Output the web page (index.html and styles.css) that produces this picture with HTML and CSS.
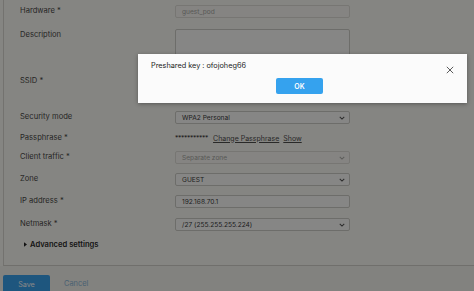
FILE: index.html
```html
<!DOCTYPE html>
<html>
<head>
<meta charset="utf-8">
<link rel="stylesheet" href="styles.css">
</head>
<body>
<div class="page">
  <div class="panel">
    <div class="row"><span class="lbl">Hardware *</span><div class="box input disabled">guest_pod</div></div>
    <div class="row gap-11"><span class="lbl">Description</span><div class="box textarea"></div></div>
    <div class="row gap-9"><span class="lbl lbl-mid">SSID *</span><div class="box input">Guest</div></div>
    <div class="row gap-24"><span class="lbl">Security mode</span><div class="box select">WPA2 Personal<svg class="chev" viewBox="0 0 8 5"><path d="M1 1l3 3 3-3"/></svg></div></div>
    <div class="row gap-8 pass-row"><span class="lbl">Passphrase *</span><div class="pass"><span class="stars">***********</span><a class="link">Change Passphrase</a><a class="link">Show</a></div></div>
    <div class="row gap-7"><span class="lbl">Client traffic *</span><div class="box select disabled">Separate zone<svg class="chev" viewBox="0 0 8 5"><path d="M1 1l3 3 3-3"/></svg></div></div>
    <div class="row gap-9"><span class="lbl">Zone</span><div class="box select">GUEST<svg class="chev" viewBox="0 0 8 5"><path d="M1 1l3 3 3-3"/></svg></div></div>
    <div class="row gap-9"><span class="lbl">IP address *</span><div class="box input">192.168.70.1</div></div>
    <div class="row gap-10"><span class="lbl">Netmask *</span><div class="box select">/27 (255.255.255.224)<svg class="chev" viewBox="0 0 8 5"><path d="M1 1l3 3 3-3"/></svg></div></div>
    <div class="advanced"><svg class="tri" viewBox="0 0 4 6"><path d="M0 0l4 3-4 3z"/></svg>Advanced settings</div>
  </div>
  <div class="footer">
    <button class="btn-save">Save</button>
    <a class="cancel">Cancel</a>
  </div>
</div>
<div class="overlay"></div>
<div class="modal">
  <div class="modal-head">
    <span class="modal-text">Preshared key : ofojoheg66</span>
    <svg class="close" viewBox="0 0 10 10"><path d="M1 1l8 8M9 1l-8 8"/></svg>
  </div>
  <div class="modal-actions"><button class="btn-ok">OK</button></div>
</div>
</body>
</html>
```
FILE: styles.css
```css
html, body {
  margin: 0;
  padding: 0;
  width: 474px;
  height: 291px;
  overflow: hidden;
  background: #fcfbf6;
  font-family: "Inter", "Liberation Sans", sans-serif;
}
.page {
  display: flex;
  flex-direction: column;
}
.panel {
  margin-left: 3px;
  border-left: 1px solid #d9d8d2;
  border-bottom: 1px solid #d3d2cc;
  padding: 5px 0 0 16px;
  height: 266px;
  box-sizing: border-box;
  display: flex;
  flex-direction: column;
}
.row {
  display: grid;
  grid-template-columns: 155px 175px;
  align-items: start;
}
.gap-7 { margin-top: 7px; }
.gap-8 { margin-top: 8px; }
.gap-9 { margin-top: 9px; }
.gap-10 { margin-top: 10px; }
.gap-11 { margin-top: 11px; }
.gap-24 { margin-top: 24px; }
.lbl {
  font-size: 7.6px;
  color: #4a4a48;
  line-height: 11px;
}
.lbl-mid { line-height: 13px; }
.box {
  height: 13px;
  box-sizing: border-box;
  border: 1px solid #cfcec8;
  border-radius: 2px;
  background: #fefefc;
  font-size: 6.6px;
  color: #3a3a3a;
  padding: 0 6px;
  display: flex;
  align-items: center;
  position: relative;
}
.box.disabled {
  color: #a8a8a4;
  background: #fbfaf6;
  border-color: #e0dfd9;
}
.textarea {
  height: 36px;
}
.chev {
  position: absolute;
  right: 4px;
  top: 4px;
  width: 6px;
  height: 4px;
  fill: none;
  stroke: #555;
  stroke-width: 1.4;
}
.disabled .chev { stroke: #b0b0ac; }
.pass-row .lbl { line-height: 12px; }
.pass {
  height: 12px;
  display: flex;
  align-items: center;
  font-size: 6.6px;
  color: #3a3a3a;
}
.stars { letter-spacing: -0.3px; margin-right: 5px; }
.link {
  text-decoration: underline;
  color: #4e4e4c;
  margin-right: 4px;
  font-size: 7px;
}
.advanced {
  margin-top: 9px;
  margin-left: 4px;
  display: flex;
  align-items: center;
  font-size: 7.6px;
  font-weight: 600;
  color: #2a2a2a;
}
.tri {
  width: 3px;
  height: 5px;
  margin-right: 3px;
  fill: #222;
}
.footer {
  height: 25px;
  background: #f6f5f0;
  display: flex;
  align-items: flex-start;
  padding: 9px 0 0 3px;
  box-sizing: border-box;
}
.btn-save {
  width: 47px;
  height: 22px;
  border: none;
  border-radius: 2px;
  background: #3aa2ee;
  color: #fff;
  font-family: inherit;
  font-size: 7.2px;
  padding: 0 0 4px;
  flex-shrink: 0;
}
.cancel {
  margin: 4px 0 0 14px;
  font-size: 7.4px;
  color: #8ab8d8;
}
.overlay {
  position: absolute;
  inset: 0;
  background: rgba(0, 0, 0, 0.47);
}
.modal {
  position: absolute;
  left: 138px;
  top: 54px;
  width: 329px;
  height: 49px;
  background: #fbfbfb;
  box-shadow: 0 1px 4px rgba(0, 0, 0, 0.35);
  box-sizing: border-box;
  padding: 7px 13px 0 13px;
  display: flex;
  flex-direction: column;
}
.modal-head {
  display: flex;
  justify-content: space-between;
  align-items: flex-start;
}
.modal-text {
  font-size: 7.3px;
  color: #222;
  line-height: 9px;
}
.close {
  width: 8px;
  height: 8px;
  margin-top: 5px;
  stroke: #444;
  stroke-width: 1.1;
}
.modal-actions {
  display: flex;
  justify-content: center;
  margin-top: 4px;
  padding-right: 6px;
}
.btn-ok {
  width: 47px;
  height: 16px;
  border: none;
  border-radius: 2px;
  background: #35a2ee;
  color: #fff;
  font-family: inherit;
  font-size: 7px;
  font-weight: 600;
  padding: 0;
}
```
